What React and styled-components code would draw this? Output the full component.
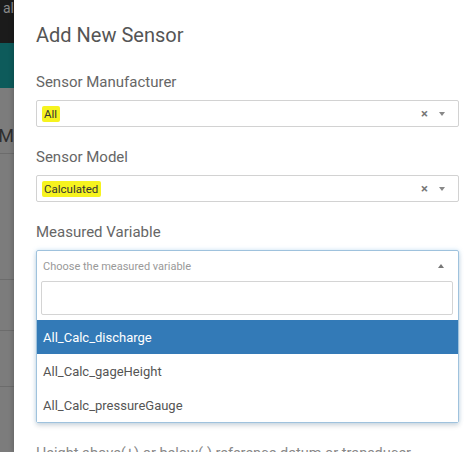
import styled, { createGlobalStyle } from 'styled-components'

const Global = createGlobalStyle`
  html, body { margin: 0; padding: 0; background: #fff; }
  body { font-family: Roboto, "Liberation Sans", sans-serif; }
`

const Page = styled.div`
  display: flex;
  width: 474px;
  height: 452px;
  overflow: hidden;
`

const Backdrop = styled.div`
  width: 14px;
  flex: none;
  display: flex;
  flex-direction: column;
  background: #7c7c7c;
  overflow: hidden;
`

const Band = styled.div`
  height: ${p => p.h}px;
  background: ${p => p.bg};
  color: ${p => p.fg || '#333'};
  font-size: ${p => p.fs || 13}px;
  white-space: nowrap;
  display: flex;
  align-items: ${p => p.align || 'center'};
  justify-content: flex-end;
  border-bottom: ${p => (p.line ? '1px solid #6c6c6c' : 'none')};
  flex: none;
`

const Modal = styled.div`
  flex: 1;
  padding: 21px 15px 0 22px;
  box-shadow: -2px 0 4px rgba(0, 0, 0, 0.15);
`

const Title = styled.h4`
  margin: 0 0 23px;
  font-size: 20px;
  font-weight: 400;
  line-height: 28px;
  color: #555;
`

const Label = styled.div`
  font-size: 15px;
  line-height: 20px;
  color: #666;
  margin-bottom: 8px;
`

const Select = styled.div`
  height: 27px;
  box-sizing: border-box;
  border: 1px solid #d2d2d2;
  border-radius: 2px;
  display: flex;
  align-items: center;
  padding: 0 13px 0 5px;
  margin-bottom: 20px;
`

const Value = styled.span`
  font-size: 11.5px;
  color: #333;
  background: #f6f31f;
  padding: 1px 3px 1px 2px;
  border-radius: 2px;
`

const Icons = styled.div`
  margin-left: auto;
  display: flex;
  align-items: center;
  gap: 11px;
  color: #888;
`

const Clear = styled.span`
  font-size: 13px;
  font-weight: 700;
  line-height: 1;
  color: #777;
`

const Caret = styled.span`
  width: 0;
  height: 0;
  border-left: 3.5px solid transparent;
  border-right: 3.5px solid transparent;
  ${p => (p.up ? 'border-bottom: 4px solid #777;' : 'border-top: 4px solid #888;')}
`

const Dropdown = styled.div`
  border: 1px solid #9fc2dd;
  border-radius: 2px;
  box-shadow: 0 0 4px rgba(102, 175, 233, 0.35), 0 3px 5px rgba(0, 0, 0, 0.12);
  margin-bottom: 21px;
`

const Head = styled.div`
  height: 30px;
  display: flex;
  align-items: center;
  padding: 0 14px 0 6px;
  font-size: 11px;
  color: #999;
`

const Search = styled.div`
  height: 34px;
  margin: 0 5px 5px 4px;
  box-sizing: border-box;
  border: 1px solid #d4d4d4;
  border-radius: 2px;
`

const Option = styled.div`
  height: 34px;
  display: flex;
  align-items: center;
  padding-left: 6px;
  font-size: 13px;
  color: ${p => (p.active ? '#fff' : '#555')};
  background: ${p => (p.active ? '#337ab7' : '#fff')};
`

const Cut = styled.div`
  font-size: 14.5px;
  color: #888;
  line-height: 20px;
`

const options = ['All_Calc_discharge', 'All_Calc_gageHeight', 'All_Calc_pressureGauge']

export default function App() {
  return (
    <Page>
      <Global />
      <Backdrop>
        <Band h={43} bg="#1b1b1b" fg="#8a8a8a" fs={14} align="flex-start">al</Band>
        <Band h={45} bg="#0d5b5b" />
        <Band h={30} bg="#7c7c7c" />
        <Band h={35} bg="#7c7c7c" fg="#2e2e2e" fs={18} line>t M</Band>
        <Band h={125} bg="#7c7c7c" line />
        <Band h={50} bg="#7c7c7c" line />
        <Band h={55} bg="#7c7c7c" line />
      </Backdrop>
      <Modal>
        <Title>Add New Sensor</Title>
        <Label>Sensor Manufacturer</Label>
        <Select>
          <Value>All</Value>
          <Icons><Clear>×</Clear><Caret /></Icons>
        </Select>
        <Label>Sensor Model</Label>
        <Select>
          <Value>Calculated</Value>
          <Icons><Clear>×</Clear><Caret /></Icons>
        </Select>
        <Label>Measured Variable</Label>
        <Dropdown>
          <Head>
            Choose the measured variable
            <Icons><Caret up /></Icons>
          </Head>
          <Search />
          {options.map((o, i) => (
            <Option key={o} active={i === 0}>{o}</Option>
          ))}
        </Dropdown>
        <Cut>Height above(+) or below(-) reference datum or transducer</Cut>
      </Modal>
    </Page>
  )
}
